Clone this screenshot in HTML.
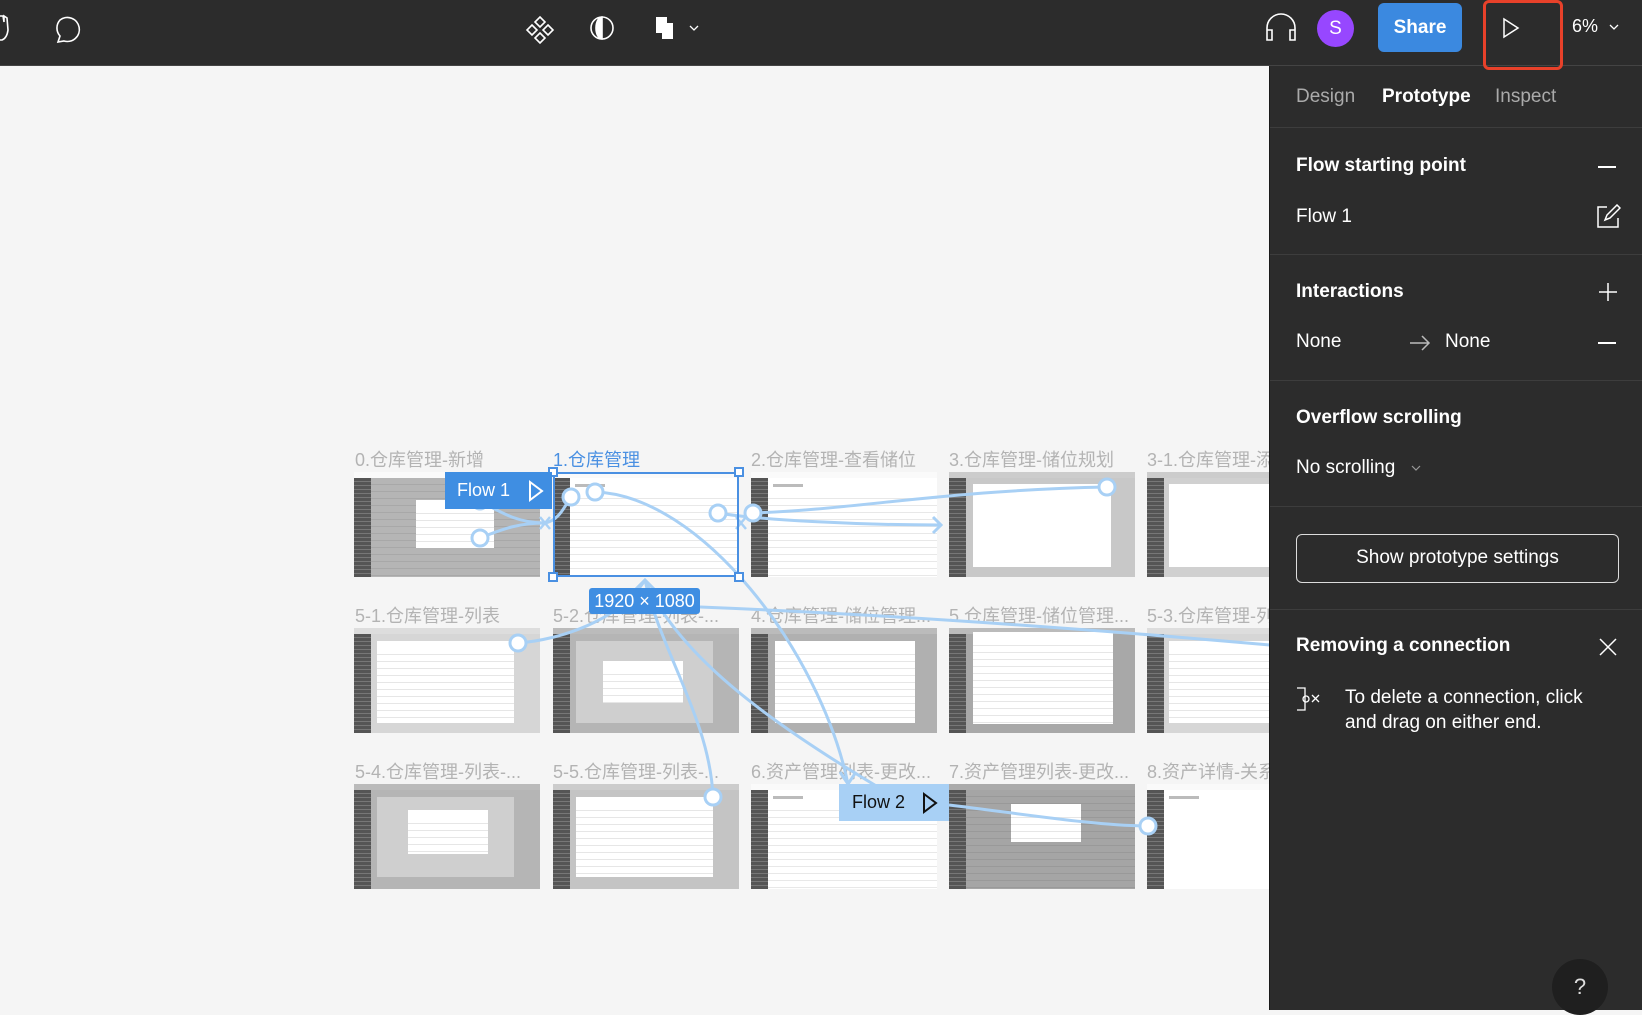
<!DOCTYPE html>
<html><head><meta charset="utf-8"><style>
*{margin:0;padding:0;box-sizing:border-box}
body{width:1642px;height:1010px;overflow:hidden;background:#f5f5f5;font-family:"Liberation Sans","Noto Sans CJK SC",sans-serif;position:relative}
.top{position:absolute;left:0;top:0;width:1642px;height:66px;background:#2c2c2c;border-bottom:1px solid #444}
.panel{position:absolute;left:1269px;top:66px;width:373px;height:944px;background:#2c2c2c;border-left:1px solid #1a1a1a;color:#fff}
.abs{position:absolute}
.lbl{position:absolute;font-size:18px;color:#b3b3b3;white-space:nowrap;line-height:20px}
.th{position:absolute;width:186px;height:105px;background:#fff;overflow:hidden}
.th .s{position:absolute;left:0;top:6px;width:17px;bottom:0;background:#555;background-image:repeating-linear-gradient(#555 0 3px,#777 3px 4px)}
.th .t{position:absolute;left:0;top:0;right:0;height:6px;background:#fafafa}
.th .m{position:absolute;left:17px;top:6px;right:0;bottom:0}
.th .c{position:absolute;background:#fff;background-image:linear-gradient(#fff 0 10px,transparent 10px),repeating-linear-gradient(#fff 0 6px,#e6e6e6 6px 7px)}
.th .w{background-image:linear-gradient(#fff 0 20px,transparent 20px),repeating-linear-gradient(#fff 0 6px,#e8e8e8 6px 7px)}
.th .r{position:absolute;left:26px;right:8px;height:1px;background:#ddd}
.th .hb{position:absolute;left:22px;top:12px;width:30px;height:3px;background:#bbb}
.div{position:absolute;left:0;width:373px;height:1px;background:#3d3d3d}
.h{position:absolute;left:26px;font-size:19px;font-weight:bold;color:#fff}
.n{position:absolute;font-size:19px;color:#fff}
</style></head><body>
<div class="top">
<svg class="abs" style="left:0;top:0" width="720" height="66" fill="none" stroke="#fff" stroke-width="1.6">
<path d="M0 16 L3 16 L4 22 L4 16 L7 18 L8 30 Q7 38 2 40 L0 40"/>
<path d="M60 20 a12 12 0 1 1 4 21 l-6 1 2-6 a12 12 0 0 1 0-16z"/>
<path d="M540 17 l5 5 -5 5 -5-5z M532 25 l5 5 -5 5 -5-5z M548 25 l5 5 -5 5 -5-5z M540 33 l5 5 -5 5 -5-5z"/>
<circle cx="602" cy="28" r="11"/><path d="M602 17 a6 11 0 0 0 0 22z" fill="#fff"/>
<path d="M656 17 h11 v6 h6 v16 h-11 v-6 h-6z" fill="#fff" stroke="none"/>
<path d="M690 26 l4 4 4-4" stroke-width="1.3"/>
</svg>
<svg class="abs" style="left:1260px;top:0" width="382" height="66" fill="none" stroke="#fff" stroke-width="1.6">
<path d="M7 38 v-10 a14 14 0 0 1 28 0 v10 M7 30 h5 v10 h-5z M35 30 h-5 v10 h5z"/>
</svg>
<div class="abs" style="left:1317px;top:10px;width:37px;height:37px;border-radius:50%;background:#9747ff;color:#fff;font-size:19px;text-align:center;line-height:37px">S</div>
<div class="abs" style="left:1378px;top:3px;width:84px;height:49px;border-radius:6px;background:#3b89e0;color:#fff;font-size:19px;font-weight:bold;text-align:center;line-height:49px">Share</div>
<div class="abs" style="left:1483px;top:0;width:80px;height:70px;border:3px solid #e8412a;border-radius:6px;z-index:5"></div>
<svg class="abs" style="left:1500px;top:16px" width="30" height="24" fill="none" stroke="#fff" stroke-width="1.5"><path d="M4 3 L18 12 L4 21z"/></svg>
<div class="abs" style="left:1572px;top:16px;color:#fff;font-size:18px">6%</div>
<svg class="abs" style="left:1608px;top:22px" width="14" height="10" fill="none" stroke="#fff" stroke-width="1.3"><path d="M2 3 l4 4 4-4"/></svg>
</div>

<div class="lbl" style="left:355px;top:450px">0.仓库管理-新增</div>
<div class="lbl" style="left:553px;top:450px;color:#4a90e2">1.仓库管理</div>
<div class="lbl" style="left:751px;top:450px">2.仓库管理-查看储位</div>
<div class="lbl" style="left:949px;top:450px">3.仓库管理-储位规划</div>
<div class="lbl" style="left:1147px;top:450px">3-1.仓库管理-添加</div>
<div class="lbl" style="left:355px;top:606px">5-1.仓库管理-列表</div>
<div class="lbl" style="left:553px;top:606px">5-2.仓库管理-列表-...</div>
<div class="lbl" style="left:751px;top:606px">4.仓库管理-储位管理...</div>
<div class="lbl" style="left:949px;top:606px">5.仓库管理-储位管理...</div>
<div class="lbl" style="left:1147px;top:606px">5-3.仓库管理-列表</div>
<div class="lbl" style="left:355px;top:762px">5-4.仓库管理-列表-...</div>
<div class="lbl" style="left:553px;top:762px">5-5.仓库管理-列表-...</div>
<div class="lbl" style="left:751px;top:762px">6.资产管理列表-更改...</div>
<div class="lbl" style="left:949px;top:762px">7.资产管理列表-更改...</div>
<div class="lbl" style="left:1147px;top:762px">8.资产详情-关系</div>

<div class="th" style="left:354px;top:472px"><div class="t"></div><div class="s"></div><div class="m" style="background:#b5b5b5;background-image:repeating-linear-gradient(#b5b5b5 0 6px,#a8a8a8 6px 7px)"></div><div class="c" style="left:62px;top:28px;width:78px;height:48px"></div></div>
<div class="th" style="left:553px;top:472px"><div class="t"></div><div class="s"></div><div class="m w c" style="left:17px"></div><div class="hb"></div></div>
<div class="th" style="left:751px;top:472px"><div class="t"></div><div class="s"></div><div class="m w c" style="left:17px"></div><div class="hb"></div></div>
<div class="th" style="left:949px;top:472px"><div class="t" style="background:#ccc"></div><div class="s"></div><div class="m" style="background:#c8c8c8"></div><div class="c" style="left:24px;top:12px;width:138px;height:83px;background-image:none"></div></div>
<div class="th" style="left:1147px;top:472px"><div class="t" style="background:#ccc"></div><div class="s"></div><div class="m" style="background:#d0d0d0"></div><div class="c" style="left:22px;top:12px;width:164px;height:83px;background-image:none"></div></div>

<div class="th" style="left:354px;top:628px"><div class="t" style="background:#ddd"></div><div class="s"></div><div class="m" style="background:#d6d6d6"></div><div class="c" style="left:23px;top:13px;width:137px;height:82px"></div></div>
<div class="th" style="left:553px;top:628px"><div class="t" style="background:#bbb"></div><div class="s"></div><div class="m" style="background:#b5b5b5"></div><div class="c" style="left:23px;top:13px;width:137px;height:82px;background:#cfcfcf;background-image:none"></div><div class="c" style="left:50px;top:33px;width:80px;height:42px"></div></div>
<div class="th" style="left:751px;top:628px"><div class="t" style="background:#bbb"></div><div class="s"></div><div class="m" style="background:#b0b0b0"></div><div class="c" style="left:24px;top:13px;width:140px;height:82px"></div></div>
<div class="th" style="left:949px;top:628px"><div class="t" style="background:#bbb"></div><div class="s"></div><div class="m" style="background:#a8a8a8"></div><div class="c" style="left:24px;top:4px;width:140px;height:92px"></div></div>
<div class="th" style="left:1147px;top:628px"><div class="t" style="background:#ddd"></div><div class="s"></div><div class="m" style="background:#d6d6d6"></div><div class="c" style="left:22px;top:13px;width:164px;height:82px"></div></div>

<div class="th" style="left:354px;top:784px"><div class="t" style="background:#bbb"></div><div class="s"></div><div class="m" style="background:#b5b5b5"></div><div class="c" style="left:23px;top:13px;width:137px;height:80px;background:#cfcfcf;background-image:none"></div><div class="c" style="left:54px;top:26px;width:80px;height:44px"></div></div>
<div class="th" style="left:553px;top:784px"><div class="t" style="background:#ccc"></div><div class="s"></div><div class="m" style="background:#c4c4c4"></div><div class="c" style="left:23px;top:13px;width:137px;height:80px"></div></div>
<div class="th" style="left:751px;top:784px"><div class="t"></div><div class="s"></div><div class="m w c" style="left:17px"></div><div class="hb"></div></div>
<div class="th" style="left:949px;top:784px"><div class="t" style="background:#aaa"></div><div class="s"></div><div class="m" style="background:#a5a5a5;background-image:repeating-linear-gradient(#a5a5a5 0 6px,#999 6px 7px)"></div><div class="c" style="left:62px;top:20px;width:70px;height:38px"></div></div>
<div class="th" style="left:1147px;top:784px"><div class="t"></div><div class="s"></div><div class="m" style="background:#fff"></div><div class="hb"></div></div>

<svg class="abs" style="left:0;top:66px" width="1270" height="944" fill="none" stroke="#a8d0f5" stroke-width="3">
<g transform="translate(0,-66)">
<path d="M480 501 C505 515 520 523 545 523 C560 520 565 505 571 497"/>
<path d="M480 538 C505 528 520 523 545 523"/>
<path d="M595 492 C700 495 820 650 848 784"/>
<path d="M718 513 C760 520 860 525 940 525"/>
<path d="M753 513 C850 510 950 490 1107 487"/>
<path d="M645 580 C620 620 560 640 518 643"/>
<path d="M645 580 C660 650 710 720 713 797"/>
<path d="M645 580 C680 660 780 730 900 800"/>
<path d="M700 607 C900 615 1100 630 1270 645"/>
<path d="M949 805 C1030 815 1100 826 1148 826"/>
<path d="M933 517 l8 8 -8 8 M840 772 l8 12 8-12 M635 590 l10-10 10 10"/>
<path d="M540 517 l10 12 M550 517 l-10 12 M736 517 l10 12 M746 517 l-10 12" stroke-width="2.5"/>
<g fill="#fff" stroke-width="3"><circle cx="480" cy="501" r="8"/><circle cx="480" cy="538" r="8"/><circle cx="571" cy="497" r="8"/><circle cx="595" cy="492" r="8"/><circle cx="718" cy="513" r="8"/><circle cx="753" cy="513" r="8"/><circle cx="1107" cy="487" r="8"/><circle cx="518" cy="643" r="8"/><circle cx="713" cy="797" r="8"/><circle cx="1148" cy="826" r="8"/></g>
</g></svg>

<div class="abs" style="left:553px;top:472px;width:186px;height:105px;border:2px solid #4a90e2"></div>
<div class="abs" style="left:548px;top:467px;width:10px;height:10px;border:2px solid #4a90e2;background:#fff"></div>
<div class="abs" style="left:734px;top:467px;width:10px;height:10px;border:2px solid #4a90e2;background:#fff"></div>
<div class="abs" style="left:548px;top:572px;width:10px;height:10px;border:2px solid #4a90e2;background:#fff"></div>
<div class="abs" style="left:734px;top:572px;width:10px;height:10px;border:2px solid #4a90e2;background:#fff"></div>
<div class="abs" style="left:445px;top:472px;width:107px;height:37px;background:#3f8ee2;color:#fff;font-size:18px;line-height:37px;padding-left:12px">Flow 1</div>
<svg class="abs" style="left:526px;top:479px" width="20" height="24" fill="none" stroke="#fff" stroke-width="2"><path d="M4 3 L16 12 L4 21z"/></svg>
<div class="abs" style="left:589px;top:588px;width:111px;height:26px;background:#3f8ee2;border-radius:3px;color:#fff;font-size:18px;line-height:26px;text-align:center">1920 × 1080</div>
<div class="abs" style="left:839px;top:784px;width:110px;height:37px;background:#a8d0f5;color:#111;font-size:18px;line-height:37px;padding-left:13px">Flow 2</div>
<svg class="abs" style="left:920px;top:791px" width="20" height="24" fill="none" stroke="#111" stroke-width="2"><path d="M4 3 L16 12 L4 21z"/></svg>

<div class="panel">
<div class="n" style="left:26px;top:20px;color:#aaa">Design</div>
<div class="n" style="left:112px;top:20px;font-weight:bold">Prototype</div>
<div class="n" style="left:225px;top:20px;color:#aaa">Inspect</div>
<div class="div" style="top:61px"></div>
<div class="h" style="top:89px">Flow starting point</div>
<div class="abs" style="left:328px;top:100px;width:18px;height:1.5px;background:#fff"></div>
<div class="n" style="left:26px;top:140px">Flow 1</div>
<svg class="abs" style="left:325px;top:138px" width="26" height="26" fill="none" stroke="#fff" stroke-width="1.5"><path d="M12 3 H3 V23 H23 V14 M10 16 l2-5 10-10 3 3 -10 10z"/></svg>
<div class="div" style="top:188px"></div>
<div class="h" style="top:215px">Interactions</div>
<svg class="abs" style="left:328px;top:216px" width="20" height="20" stroke="#fff" stroke-width="1.5"><path d="M10 1v18M1 10h18"/></svg>
<div class="n" style="left:26px;top:265px">None</div>
<svg class="abs" style="left:138px;top:268px" width="24" height="18" fill="none" stroke="#bbb" stroke-width="1.5"><path d="M2 9h19M14 2l7 7-7 7"/></svg>
<div class="n" style="left:175px;top:265px">None</div>
<div class="abs" style="left:328px;top:276px;width:18px;height:1.5px;background:#fff"></div>
<div class="div" style="top:314px"></div>
<div class="h" style="top:341px">Overflow scrolling</div>
<div class="n" style="left:26px;top:391px">No scrolling</div>
<svg class="abs" style="left:140px;top:397px" width="12" height="10" fill="none" stroke="#999" stroke-width="1.2"><path d="M2 3l4 4 4-4"/></svg>
<div class="div" style="top:440px"></div>
<div class="abs" style="left:26px;top:468px;width:323px;height:49px;border:1.5px solid #ddd;border-radius:6px;color:#fff;font-size:19px;text-align:center;line-height:46px">Show prototype settings</div>
<div class="div" style="top:543px"></div>
<div class="h" style="top:569px">Removing a connection</div>
<svg class="abs" style="left:328px;top:571px" width="20" height="20" stroke="#fff" stroke-width="1.5"><path d="M2 2l16 16M18 2L2 18"/></svg>
<svg class="abs" style="left:26px;top:620px" width="30" height="28" fill="none" stroke="#fff" stroke-width="1.3"><path d="M1 2h8v22h-8"/><circle cx="10" cy="13" r="3"/><path d="M16 9l7 7M23 9l-7 7"/></svg>
<div class="n" style="left:75px;top:619px;line-height:25px">To delete a connection, click<br>and drag on either end.</div>
<div class="abs" style="left:282px;top:893px;width:56px;height:56px;border-radius:50%;background:#1f1f1f;color:#ddd;font-size:22px;text-align:center;line-height:56px">?</div>
</div>
</body></html>
